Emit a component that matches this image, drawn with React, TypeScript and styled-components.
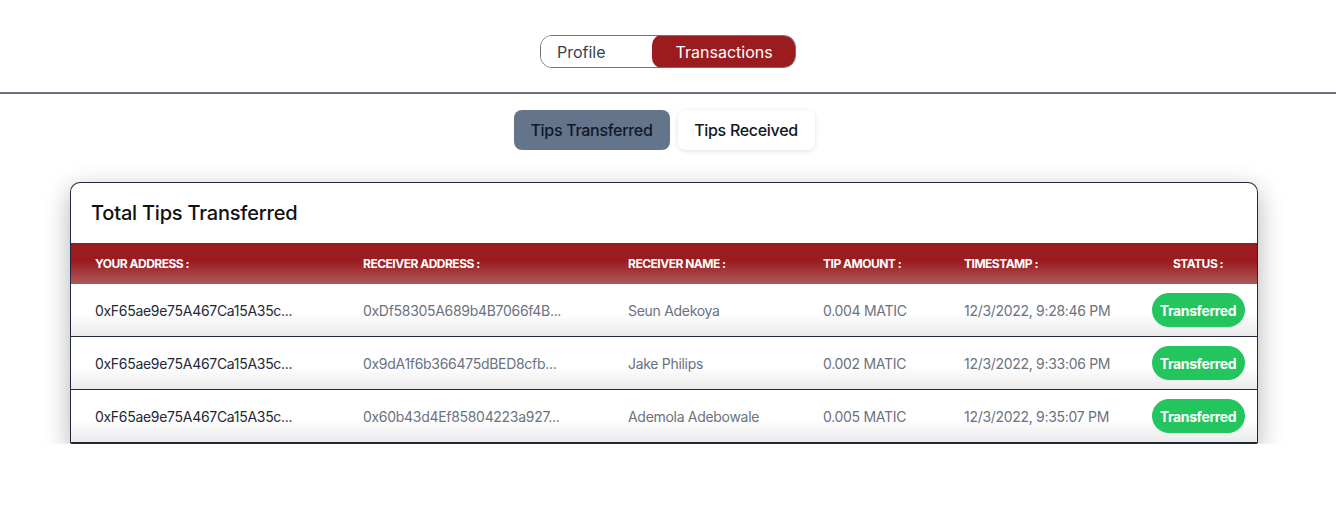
import React, { useState } from "react";
import styled, { createGlobalStyle } from "styled-components";

const Global = createGlobalStyle`
  * { box-sizing: border-box; }
  body { margin: 0; background: #fff; font-family: Inter, "Noto Sans", sans-serif; }
`;

const Page = styled.div`
  display: flex;
  flex-direction: column;
  align-items: center;
  padding-top: 35px;
`;

const Content = styled.div`
  display: flex;
  flex-direction: column;
  align-items: center;
  padding-right: 8px;
`;

const Toggle = styled.div`
  display: flex;
  width: 256px;
  height: 33px;
  border: 1px solid #6b7280;
  border-radius: 12px;
  overflow: hidden;
`;

const ToggleBtn = styled.button<{ $active?: boolean; $w: number }>`
  width: ${(p) => p.$w}px;
  border: none;
  margin: ${(p) => (p.$active ? "-1px -1px -1px 0" : "0")};
  border-radius: ${(p) => (p.$active ? "10px" : "0")};
  background: ${(p) => (p.$active ? "#9b1c1f" : "#fff")};
  color: ${(p) => (p.$active ? "#fff" : "#374151")};
  font-family: Inter, sans-serif;
  font-size: 16px;
  text-align: ${(p) => (p.$active ? "center" : "left")};
  padding: ${(p) => (p.$active ? "0" : "0 0 0 16px")};
  cursor: pointer;
`;

const Divider = styled.hr`
  align-self: stretch;
  margin: 24px 0 0;
  border: none;
  border-top: 2px solid #6b7280;
`;

const Tabs = styled.div`
  display: flex;
  gap: 8px;
  margin-top: 16px;
`;

const Tab = styled.button<{ $active?: boolean; $w: number }>`
  width: ${(p) => p.$w}px;
  height: 40px;
  border: none;
  border-radius: 8px;
  background: ${(p) => (p.$active ? "#64748b" : "#fff")};
  box-shadow: ${(p) => (p.$active ? "none" : "0 1px 5px rgba(0,0,0,0.13)")};
  color: #111827;
  font-family: Inter, sans-serif;
  font-size: 16px;
  font-weight: 500;
  letter-spacing: -0.3px;
  cursor: pointer;
`;

const Card = styled.div`
  margin-top: 32px;
  width: 1188px;
  border: 1px solid #1f2937;
  border-bottom-width: 2px;
  border-radius: 10px 10px 2px 2px;
  box-shadow: 0 8px 26px rgba(0, 0, 0, 0.3);
  overflow: hidden;
  background: #fff;
`;

const Title = styled.h2`
  margin: 0;
  height: 60px;
  display: flex;
  align-items: center;
  padding-left: 20px;
  font-size: 20px;
  font-weight: 500;
  letter-spacing: -0.2px;
  color: #111;
`;

const cols = "268px 265px 195px 141px 199px 1fr";

const HeadRow = styled.div`
  display: grid;
  grid-template-columns: ${cols};
  height: 41px;
  align-items: center;
  background: linear-gradient(to bottom, #9b1c1f 0%, #9b1c1f 45%, #ae5a5c 100%);
`;

const HeadCell = styled.div<{ $center?: boolean }>`
  padding-left: ${(p) => (p.$center ? "0" : "24px")};
  text-align: ${(p) => (p.$center ? "center" : "left")};
  color: #fff;
  font-size: 12px;
  font-weight: 700;
  letter-spacing: -0.5px;
`;

const Row = styled.div<{ $last?: boolean }>`
  display: grid;
  grid-template-columns: ${cols};
  height: ${(p) => (p.$last ? "52px" : "53px")};
  align-items: center;
  border-bottom: ${(p) => (p.$last ? "none" : "1px solid #1f2937")};
  background: linear-gradient(to bottom, #fff 0%, #fff 55%, #ebebeb 100%);
`;

const Cell = styled.div<{ $dark?: boolean }>`
  padding-left: 24px;
  font-size: 14px;
  letter-spacing: -0.3px;
  color: ${(p) => (p.$dark ? "#1f2937" : "#6b7280")};
  white-space: nowrap;
`;

const StatusCell = styled.div`
  display: flex;
  justify-content: center;
`;

const Badge = styled.span`
  display: inline-flex;
  align-items: center;
  justify-content: center;
  width: 93px;
  height: 34px;
  border-radius: 17px;
  background: #22c55e;
  color: #fff;
  font-size: 14px;
  font-weight: 700;
  letter-spacing: -0.4px;
`;

const rows = [
  ["0xF65ae9e75A467Ca15A35c...", "0xDf58305A689b4B7066f4B...", "Seun Adekoya", "0.004 MATIC", "12/3/2022, 9:28:46 PM"],
  ["0xF65ae9e75A467Ca15A35c...", "0x9dA1f6b366475dBED8cfb...", "Jake Philips", "0.002 MATIC", "12/3/2022, 9:33:06 PM"],
  ["0xF65ae9e75A467Ca15A35c...", "0x60b43d4Ef85804223a927...", "Ademola Adebowale", "0.005 MATIC", "12/3/2022, 9:35:07 PM"],
];

export default function App() {
  const [tab, setTab] = useState(0);
  return (
    <>
      <Global />
      <Page>
        <Toggle>
          <ToggleBtn $w={112}>Profile</ToggleBtn>
          <ToggleBtn $w={145} $active>Transactions</ToggleBtn>
        </Toggle>
        <Divider />
        <Content>
          <Tabs>
            <Tab $w={156} $active={tab === 0} onClick={() => setTab(0)}>Tips Transferred</Tab>
            <Tab $w={137} $active={tab === 1} onClick={() => setTab(1)}>Tips Received</Tab>
          </Tabs>
          <Card>
            <Title>Total Tips Transferred</Title>
            <HeadRow>
              <HeadCell>YOUR ADDRESS :</HeadCell>
              <HeadCell>RECEIVER ADDRESS :</HeadCell>
              <HeadCell>RECEIVER NAME :</HeadCell>
              <HeadCell>TIP AMOUNT :</HeadCell>
              <HeadCell>TIMESTAMP :</HeadCell>
              <HeadCell $center>STATUS :</HeadCell>
            </HeadRow>
            {rows.map((r, i) => (
              <Row key={i} $last={i === rows.length - 1}>
                <Cell $dark>{r[0]}</Cell>
                <Cell>{r[1]}</Cell>
                <Cell>{r[2]}</Cell>
                <Cell>{r[3]}</Cell>
                <Cell>{r[4]}</Cell>
                <StatusCell>
                  <Badge>Transferred</Badge>
                </StatusCell>
              </Row>
            ))}
          </Card>
        </Content>
      </Page>
    </>
  );
}
